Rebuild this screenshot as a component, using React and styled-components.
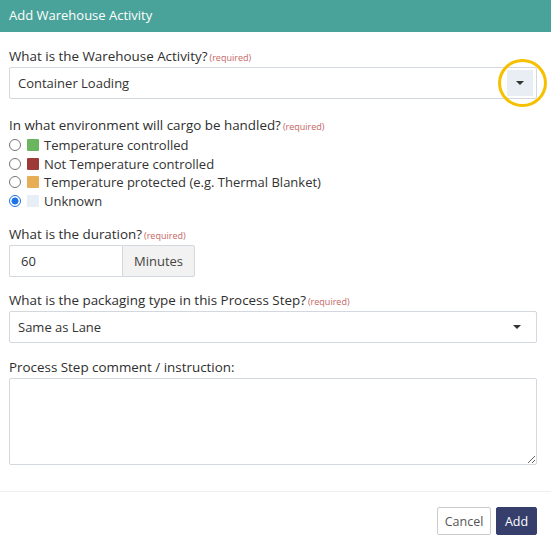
import React from "react";
import styled, { createGlobalStyle } from "styled-components";

const Global = createGlobalStyle`
  * { box-sizing: border-box; }
  body { margin: 0; background: #fff; font-family: "Open Sans", "Liberation Sans", sans-serif; color: #333; }
`;

const Modal = styled.div`
  width: 551px;
  height: 546px;
  background: #fff;
  display: flex;
  flex-direction: column;
`;

const Header = styled.div`
  height: 32px;
  background: #4aa39a;
  color: #fff;
  font-size: 13px;
  display: flex;
  align-items: center;
  padding: 0 9px 3px;
`;

const Body = styled.div`
  padding: 15px 14px 0 9px;
  display: flex;
  flex-direction: column;
`;

const Group = styled.div`
  margin-bottom: ${(p) => p.$mb}px;
`;

const Label = styled.div`
  display: flex;
  align-items: baseline;
  height: 18px;
  font-size: 13.4px;
  color: #2e2e2e;
  line-height: 18px;
  margin-bottom: 2px;
  white-space: nowrap;
`;

const Req = styled.span`
  font-size: 9px;
  line-height: 18px;
  color: #c4665f;
  margin-left: 2px;
`;

const SelectBox = styled.div`
  position: relative;
  height: 32px;
  border: 1px solid #d3d8de;
  border-radius: 2px;
  display: flex;
  align-items: center;
  padding: 0 10px 0 8px;
  font-size: 13px;
  color: #333;
  justify-content: space-between;
`;

const ArrowBtn = styled.div`
  width: 26px;
  height: 26px;
  background: ${(p) => (p.$filled ? "#e8eef3" : "transparent")};
  display: flex;
  align-items: center;
  justify-content: center;
  margin-right: ${(p) => (p.$filled ? -7 : -4)}px;
`;

const Caret = styled.span`
  width: 0;
  height: 0;
  border-left: 4px solid transparent;
  border-right: 4px solid transparent;
  border-top: 4px solid #333;
`;

const Highlight = styled.div`
  position: absolute;
  right: -11px;
  top: -9px;
  width: 49px;
  height: 48px;
  border: 3px solid #f6c000;
  border-radius: 50%;
  pointer-events: none;
`;

const RadioList = styled.div`
  display: flex;
  flex-direction: column;
  margin-top: 1px;
`;

const RadioRow = styled.label`
  display: flex;
  align-items: center;
  height: 18.5px;
  font-size: 13px;
  color: #333;
`;

const Radio = styled.input`
  appearance: none;
  margin: 0 6px 0 0;
  width: 12px;
  height: 12px;
  border-radius: 50%;
  border: 1px solid #767676;
  background: #fff;
  &:checked {
    border-color: #1a73e8;
    background: radial-gradient(circle, #1a73e8 0 3.2px, #fff 3.8px);
  }
`;

const Swatch = styled.span`
  width: 12px;
  height: 12px;
  border-radius: 1px;
  background: ${(p) => p.$c};
  margin-right: 5px;
`;

const InputGroup = styled.div`
  display: flex;
  height: 32px;
  width: 186px;
`;

const TextInput = styled.div`
  width: 113px;
  border: 1px solid #d3d8de;
  border-right: none;
  border-radius: 2px 0 0 2px;
  display: flex;
  align-items: center;
  padding-left: 11px;
  font-size: 13px;
`;

const Addon = styled.div`
  flex: 1;
  border: 1px solid #d3d8de;
  border-radius: 0 2px 2px 0;
  background: #f2f2f2;
  display: flex;
  align-items: center;
  justify-content: center;
  font-size: 13px;
  color: #444;
`;

const TextArea = styled.textarea`
  display: block;
  width: 100%;
  height: 87px;
  border: 1px solid #d3d8de;
  border-radius: 2px;
  resize: vertical;
  font-family: inherit;
`;

const Footer = styled.div`
  margin-top: 26px;
  border-top: 1px solid #eceeef;
  padding: 15px 14px 0 9px;
  display: flex;
  justify-content: flex-end;
  gap: 5px;
`;

const Button = styled.button`
  height: 28px;
  width: ${(p) => (p.$primary ? 41 : 54)}px;
  padding: 0;
  font-family: inherit;
  font-size: 12.5px;
  border-radius: 2px;
  border: 1px solid ${(p) => (p.$primary ? "#363f6c" : "#ccc")};
  background: ${(p) => (p.$primary ? "#363f6c" : "#fff")};
  color: ${(p) => (p.$primary ? "#fff" : "#555")};
`;

const envs = [
  { c: "#6ab560", t: "Temperature controlled" },
  { c: "#9e3b36", t: "Not Temperature controlled" },
  { c: "#e8ae56", t: "Temperature protected (e.g. Thermal Blanket)" },
  { c: "#e7eef5", t: "Unknown", checked: true },
];

export default function App() {
  return (
    <>
      <Global />
      <Modal>
        <Header>Add Warehouse Activity</Header>
        <Body>
          <Group $mb={17}>
            <Label>
              What is the Warehouse Activity?<Req>(required)</Req>
            </Label>
            <SelectBox>
              Container Loading
              <ArrowBtn $filled>
                <Caret />
              </ArrowBtn>
              <Highlight />
            </SelectBox>
          </Group>
          <Group $mb={15}>
            <Label>
              In what environment will cargo be handled?<Req>(required)</Req>
            </Label>
            <RadioList>
              {envs.map((e) => (
                <RadioRow key={e.t}>
                  <Radio type="radio" name="env" defaultChecked={e.checked} />
                  <Swatch $c={e.c} />
                  {e.t}
                </RadioRow>
              ))}
            </RadioList>
          </Group>
          <Group $mb={14}>
            <Label>
              What is the duration?<Req>(required)</Req>
            </Label>
            <InputGroup>
              <TextInput>60</TextInput>
              <Addon>Minutes</Addon>
            </InputGroup>
          </Group>
          <Group $mb={15}>
            <Label>
              What is the packaging type in this Process Step?<Req>(required)</Req>
            </Label>
            <SelectBox>
              Same as Lane
              <ArrowBtn>
                <Caret />
              </ArrowBtn>
            </SelectBox>
          </Group>
          <Group $mb={0}>
            <Label>Process Step comment / instruction:</Label>
            <TextArea />
          </Group>
        </Body>
        <Footer>
          <Button>Cancel</Button>
          <Button $primary>Add</Button>
        </Footer>
      </Modal>
    </>
  );
}
